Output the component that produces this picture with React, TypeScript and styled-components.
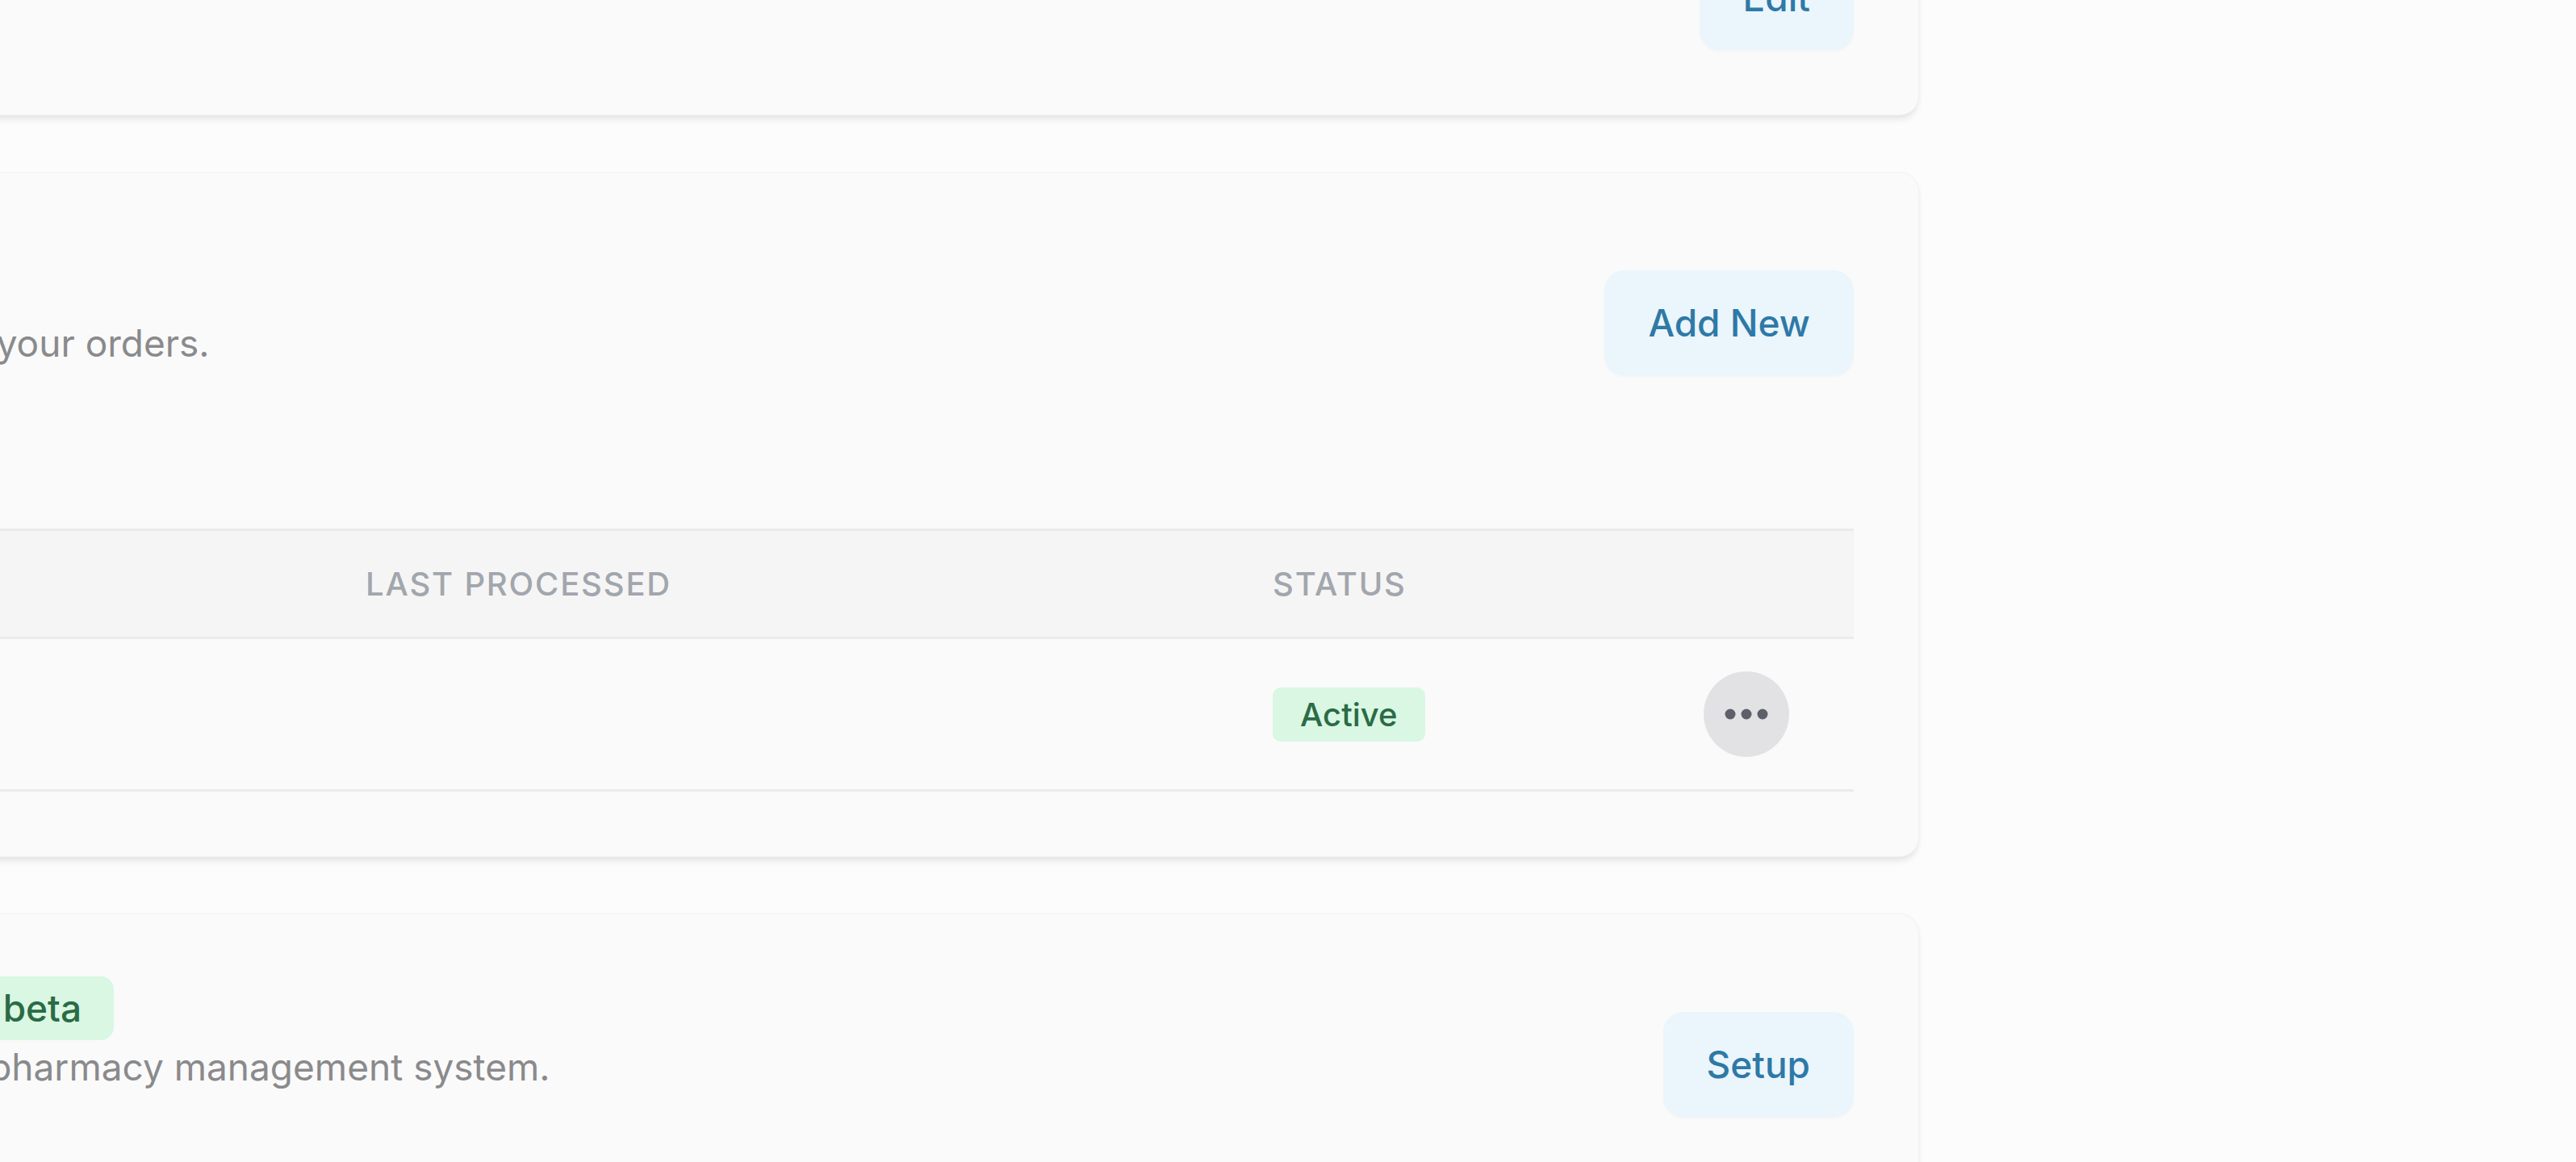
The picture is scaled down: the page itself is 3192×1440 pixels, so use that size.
import React from 'react'
import styled, {createGlobalStyle} from 'styled-components'

const GlobalStyle = createGlobalStyle`
  html, body {margin:0; padding:0; background:#fcfcfc;}
  body {font-family: Inter, "Noto Sans", "Liberation Sans", sans-serif; -webkit-font-smoothing: antialiased;}
  #root {width:3192px; height:1440px; overflow:hidden;}
  * {box-sizing:border-box;}
`

// the screenshot is a zoomed-in crop, so the stack starts left of and above the viewport
const Stack = styled.div`
  display:flex; flex-direction:column; gap:70px;
  width:3325px; margin:-145px 0 0 -947px;
`

const Card = styled.section`
  background:#fafafa; border:1px solid #f2f2f2; border-radius:24px;
  padding:76px 80px 80px;
  box-shadow: 0 8px 10px -3px rgba(0,0,0,0.07), 0 3px 6px rgba(0,0,0,0.04);
`

const Header = styled.div<{$minHeight?: number}>`
  display:flex; justify-content:space-between; align-items:center;
  min-height:${p => p.$minHeight ? `${p.$minHeight}px` : 'auto'};
`

const Info = styled.div`
  align-self:flex-start; display:flex; flex-direction:column;
`

const Title = styled.h3<{$tight?: boolean}>`
  margin:0 0 ${p => p.$tight ? 0 : 10}px; font-size:53px; font-weight:600; color:#2b2f36;
  line-height:${p => p.$tight ? 64 : 92}px;
`

const TitleRow = styled.div`
  display:flex; align-items:center; gap:36px; height:80px;
  ${Title} {margin:0; line-height:66px;}
`

const Desc = styled.p`
  margin:0; font-size:46px; line-height:66px; color:#8a8a8c;
`

const Badge = styled.span<{$size?: 'sm' | 'md'}>`
  display:inline-flex; align-items:center; justify-content:center;
  background:#d9f7e3; color:#2b6b45; font-weight:500;
  font-size:${p => p.$size === 'md' ? 46 : 40}px;
  height:${p => p.$size === 'md' ? 79 : 67}px;
  padding:0 ${p => p.$size === 'md' ? 40 : 34}px;
  border-radius:${p => p.$size === 'md' ? 16 : 10}px;
`

const Button = styled.button`
  flex:none; height:130px; padding:0 54px; border:0; border-radius:25px;
  background:#ebf5fc; color:#2e79a6; font-family:inherit; font-size:46px; font-weight:500;
  box-shadow: 0 2px 3px rgba(40,90,130,0.04);
`

const Table = styled.div`
  margin-top:145px;
  display:grid; grid-template-columns:1239px 1124px 1fr 348px;
`

const HeadCell = styled.div<{$align?: 'end'}>`
  display:flex; align-items:center; height:137px; padding:0 80px;
  justify-content:${p => p.$align === 'end' ? 'flex-end' : 'flex-start'};
  background:#f5f5f5; border-top:3px solid #ebebeb; border-bottom:3px solid #ebebeb;
  font-size:40px; font-weight:500; letter-spacing:0.045em; text-transform:uppercase; color:#a2a6ad;
`

const Cell = styled.div<{$align?: 'end'}>`
  display:flex; align-items:center; height:189px; padding:0 80px;
  justify-content:${p => p.$align === 'end' ? 'flex-end' : 'flex-start'};
  border-bottom:3px solid #ebebeb;
  font-size:46px; color:#2b2f36;
`

const DotsButton = styled.button`
  width:106px; height:106px; border:0; border-radius:50%; padding:0;
  display:flex; align-items:center; justify-content:center;
  background:#e2e2e4; color:#5d6068;
`

const Dots = () => (
  <svg width="54" height="14" viewBox="0 0 54 14" fill="currentColor">
    <circle cx="7" cy="7" r="6.5" />
    <circle cx="27" cy="7" r="6.5" />
    <circle cx="47" cy="7" r="6.5" />
  </svg>
)

const App: React.FC = () => {
  return (
    <>
      <GlobalStyle />
      <Stack>
        <Card>
          <Header>
            <Info>
              <Title $tight>Printing</Title>
              <Desc>Label printer settings.</Desc>
            </Info>
            <Button>Edit</Button>
          </Header>
        </Card>

        <Card>
          <Header $minHeight={220}>
            <Info>
              <Title>Automation Rules</Title>
              <Desc>Create rules that automatically process your orders.</Desc>
            </Info>
            <Button>Add New</Button>
          </Header>
          <Table>
            <HeadCell>Name</HeadCell>
            <HeadCell>Last processed</HeadCell>
            <HeadCell>Status</HeadCell>
            <HeadCell $align="end" />
            <Cell>Auto-print</Cell>
            <Cell />
            <Cell><Badge>Active</Badge></Cell>
            <Cell $align="end"><DotsButton aria-label="More"><Dots /></DotsButton></Cell>
          </Table>
        </Card>

        <Card>
          <Header $minHeight={220}>
            <Info>
              <TitleRow>
                <Title>Pharmacy Software Integration</Title>
                <Badge $size="md">beta</Badge>
              </TitleRow>
              <Desc>Connect your business directly to your pharmacy management system.</Desc>
            </Info>
            <Button>Setup</Button>
          </Header>
        </Card>
      </Stack>
    </>
  )
}

export default App
